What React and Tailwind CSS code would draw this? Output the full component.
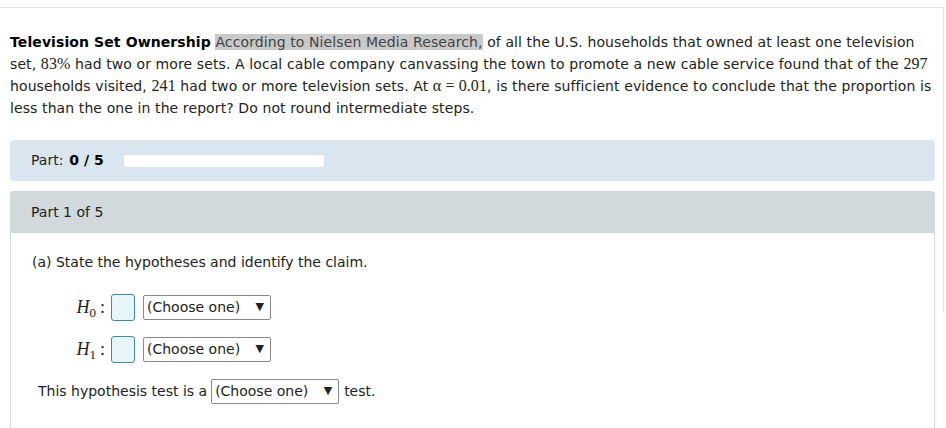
import React from "react";

const serif = { fontFamily: '"Liberation Serif", "Times New Roman", serif' };

function Select({ className = "" }) {
  return (
    <div className={`flex h-[25px] w-[128px] items-center justify-between rounded-[2px] border border-[#8a8a8a] bg-white pl-[3px] pr-[6px] text-[14px] text-[#222] ${className}`}>
      <span>(Choose one)</span>
      <span className="text-[11px]">▼</span>
    </div>
  );
}

function Hyp({ sub }) {
  return (
    <div className="flex items-center">
      <div className="flex w-[76px] items-center justify-end pr-[3px] text-[18px] text-[#222]" style={serif}>
        <span className="italic">H</span>
        <span className="inline-block translate-y-[5px] text-[13px]">{sub}</span>
        <span className="ml-[4px]">:</span>
      </div>
      <div className="ml-[3px] h-[27px] w-[24px] rounded-[3px] border border-[#3a8d9c] bg-[#e6f5f8]" />
      <Select className="ml-[8px]" />
    </div>
  );
}

function M({ children }) {
  return (
    <span className="text-[16px] leading-[16px]" style={serif}>
      {children}
    </span>
  );
}

export default function App() {
  return (
    <div className="relative h-[428px] w-[946px] overflow-hidden bg-white text-[14px] text-[#222]" style={{ fontFamily: '"DejaVu Sans", Verdana, sans-serif' }}>
      <div className="absolute left-0 top-[7px] h-px w-[944px] bg-[#dfe5e7]" />
      <div className="absolute left-[943px] top-[7px] h-[305px] w-px bg-[#dfe5e7]" />
      <div className="pl-[10px] pr-[11px] pt-[31px]">
        <p className="w-[930px] leading-[22px] tracking-[0.1px]">
          <b className="text-black">Television Set Ownership</b>{" "}
          <span className="bg-[#c9c9c9] text-[#444]">According to Nielsen Media Research,</span> of all the U.S. households that owned at least one television set, <M>83%</M> had two or more sets. A local cable company canvassing the town to promote a new cable service found that of the <M>297</M> households visited, <M>241</M> had two or more television sets. At <M>α = 0.01</M>, is there sufficient evidence to conclude that the proportion is less than the one in the report? Do not round intermediate steps.
        </p>
        <div className="mt-[21px] flex h-[41px] w-[925px] items-center rounded-[4px] bg-[#dae6ef] pl-[21px]">
          <span>Part:</span>
          <b className="ml-[6px] text-black">0 / 5</b>
          <div className="ml-[20px] h-[12px] w-[200px] rounded-[3px] bg-white" />
        </div>
        <div className="mt-[10px] w-[925px]">
          <div className="flex h-[42px] items-center rounded-t-[4px] bg-[#d1d9dc] pl-[21px]">Part 1 of 5</div>
          <div className="h-[200px] border-x border-[#d1d9dc] pl-[21px] pt-[19px]">
            <div>(a) State the hypotheses and identify the claim.</div>
            <div className="mt-[21px] flex flex-col gap-[15px]">
              <Hyp sub="0" />
              <Hyp sub="1" />
            </div>
            <div className="mt-[16px] flex items-center pl-[6px]">
              <span>This hypothesis test is a</span>
              <Select className="ml-[4px]" />
              <span className="ml-[5px]">test.</span>
            </div>
          </div>
        </div>
      </div>
    </div>
  );
}
